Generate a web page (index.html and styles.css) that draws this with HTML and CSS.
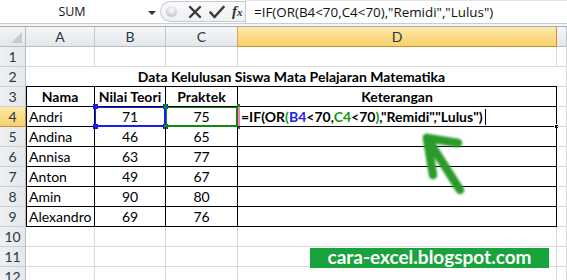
FILE: index.html
```html
<!DOCTYPE html>
<html>
<head>
<meta charset="utf-8">
<link rel="stylesheet" href="styles.css">
</head>
<body>
<div class="fbar">
  <div class="namebox"><span class="nb-text">SUM</span><span class="nb-arrow"></span></div>
  <div class="fbtns">
    <span class="dot"></span>
    <svg class="ico" width="14" height="14" viewBox="0 0 14 14"><path d="M2 2 L12 12 M12 2 L2 12" stroke="#3a3a3a" stroke-width="2.4" stroke-linecap="round"/></svg>
    <svg class="ico" width="16" height="14" viewBox="0 0 16 14"><path d="M1.5 7.5 L5.5 12 L14.5 2" stroke="#3a3a3a" stroke-width="2.6" fill="none" stroke-linecap="round" stroke-linejoin="round"/></svg>
    <span class="fx">f<span class="fxx">x</span></span>
  </div>
  <div class="finput">=IF(OR(B4&lt;70,C4&lt;70),"Remidi","Lulus")</div>
</div>
<div class="band"></div>
<div class="sheet">
  <div class="corner"><span class="tri"></span></div>
  <div class="ch">A</div><div class="ch">B</div><div class="ch">C</div><div class="ch sel">D</div><div class="ch e"></div>

  <div class="rh">1</div><div class="c"></div><div class="c"></div><div class="c"></div><div class="c"></div><div class="c e"></div>

  <div class="rh">2</div><div class="c title">Data Kelulusan Siswa Mata Pelajaran Matematika</div><div class="c e"></div>

  <div class="rh">3</div><div class="c t tl hd">Nama</div><div class="c t hd">Nilai Teori</div><div class="c t hd">Praktek</div><div class="c t hd">Keterangan</div><div class="c e"></div>

  <div class="rh sel">4</div><div class="c t tl">Andri</div><div class="c t num b4">71<i class="h h1"></i><i class="h h2"></i><i class="h h3"></i><i class="h h4"></i></div><div class="c t num c4">75<i class="h h1"></i><i class="h h2"></i><i class="h h3"></i><i class="h h4"></i></div><div class="c t d4"><span class="fm">=IF(OR<span class="g">(</span><span class="bl">B4</span>&lt;70,<span class="g">C4</span>&lt;70<span class="g">)</span>,"Remidi","Lulus")</span><span class="caret"></span><i class="fill"></i></div><div class="c e"></div>

  <div class="rh">5</div><div class="c t tl">Andina</div><div class="c t num">46</div><div class="c t num">65</div><div class="c t"></div><div class="c e"></div>
  <div class="rh">6</div><div class="c t tl">Annisa</div><div class="c t num">63</div><div class="c t num">77</div><div class="c t"></div><div class="c e"></div>
  <div class="rh">7</div><div class="c t tl">Anton</div><div class="c t num">49</div><div class="c t num">67</div><div class="c t"></div><div class="c e"></div>
  <div class="rh">8</div><div class="c t tl">Amin</div><div class="c t num">90</div><div class="c t num">80</div><div class="c t"></div><div class="c e"></div>
  <div class="rh">9</div><div class="c t tl">Alexandro</div><div class="c t num">69</div><div class="c t num">76</div><div class="c t"></div><div class="c e"></div>

  <div class="rh">10</div><div class="c"></div><div class="c"></div><div class="c"></div><div class="c"></div><div class="c e"></div>
  <div class="rh">11</div><div class="c"></div><div class="c"></div><div class="c"></div><div class="c"></div><div class="c e"></div>
  <div class="rh">12</div><div class="c"></div><div class="c"></div><div class="c"></div><div class="c"></div><div class="c e"></div>

  <svg class="arrow" width="80" height="80" viewBox="0 0 80 80">
    <defs><filter id="bl" x="-20%" y="-20%" width="140%" height="140%"><feGaussianBlur stdDeviation="1"/></filter></defs>
    <g filter="url(#bl)" stroke="#2a9a2a" stroke-width="8.5" stroke-linecap="round" fill="none">
      <path d="M9 7 L42 59"/>
      <path d="M9 7 L40 12"/>
      <path d="M9 7 L15 44"/>
    </g>
  </svg>
  <div class="wm">cara-excel.blogspot.com</div>
</div>
</body>
</html>
```
FILE: styles.css
```css
html, body {
  margin: 0;
  padding: 0;
  width: 567px;
  height: 280px;
  overflow: hidden;
  background: #ffffff;
  font-family: Lato, "Noto Sans", sans-serif;
}

.fbar {
  display: flex;
  height: 23px;
  background: #ffffff;
}

.namebox {
  width: 160px;
  position: relative;
  display: flex;
  align-items: center;
  justify-content: center;
  font-family: "Open Sans", "Noto Sans", sans-serif;
  font-size: 12.5px;
  color: #111;
  box-sizing: border-box;
}
.nb-text { margin-left: -16px; }
.nb-arrow {
  position: absolute;
  left: 148px;
  top: 11px;
  width: 0;
  height: 0;
  border-left: 4px solid transparent;
  border-right: 4px solid transparent;
  border-top: 4px solid #333;
}

.fbtns {
  width: 85px;
  box-sizing: border-box;
  display: flex;
  align-items: center;
  gap: 7px;
  padding-left: 5px;
  background: linear-gradient(#f9fafb, #eef0f2);
  border: 1px solid #c6cad0;
  border-right: none;
  border-radius: 11px 0 0 11px;
  margin-top: 1px;
  height: 21px;
}
.dot {
  width: 11px;
  height: 11px;
  border-radius: 50%;
  background: radial-gradient(circle at 50% 35%, #ffffff, #c9ccd1 70%, #b3b7bd);
  margin-right: 4px;
}
.ico { display: block; }
.fx {
  font-family: "Liberation Serif", "DejaVu Serif", serif;
  font-style: italic;
  font-weight: bold;
  font-size: 15px;
  color: #333;
  line-height: 1;
}
.fxx { font-size: 11px; }

.finput {
  flex: 1;
  border-left: 1px solid #c6cad0;
  border-top: 1px solid #e2e4e7;
  padding-left: 8px;
  font-family: "Open Sans", "Noto Sans", sans-serif;
  font-size: 13.4px;
  color: #111;
  display: flex;
  align-items: center;
}

.band {
  border-top: 1px solid #c9cdd3;
  border-bottom: 1px solid #a8adb4;
  background: #f4f5f6;
  box-sizing: border-box;
  height: 4px;
}

.sheet {
  position: relative;
  display: grid;
  grid-template-columns: 26px 69px 71px 72px 319px 10px;
  grid-auto-rows: 20px;
}

.corner {
  background: linear-gradient(#f3f4f6, #e3e6ea);
  border-right: 1px solid #b9bec5;
  border-bottom: 1px solid #b9bec5;
  box-sizing: border-box;
  position: relative;
}
.tri {
  position: absolute;
  right: 3px;
  bottom: 3px;
  width: 0;
  height: 0;
  border-left: 11px solid transparent;
  border-bottom: 11px solid #c8ccd1;
}

.ch {
  background: linear-gradient(#f5f6f8, #e4e7eb);
  border-right: 1px solid #c2c7cd;
  border-bottom: 1px solid #b9bec5;
  box-sizing: border-box;
  display: flex;
  align-items: center;
  justify-content: center;
  font-size: 14px;
  color: #2a3645;
}
.ch.sel {
  background: linear-gradient(#fde9a9, #f8d06b);
  border-right: 1px solid #c8923a;
  border-bottom: 1px solid #c8923a;
  border-left: 1px solid #d9a54a;
  margin-left: -1px;
}

.rh {
  background: linear-gradient(90deg, #eef0f3, #e5e8ec);
  border-right: 1px solid #b9bec5;
  border-bottom: 1px solid #cdd1d6;
  box-sizing: border-box;
  display: flex;
  align-items: center;
  justify-content: center;
  font-size: 14px;
  color: #2a3645;
}
.rh.sel {
  background: linear-gradient(#fde9a9, #f8d06b);
  border-right: 1px solid #c8923a;
  border-bottom: 1px solid #c8923a;
}

.c {
  border-right: 1px solid #d9d9d9;
  border-bottom: 1px solid #d9d9d9;
  box-sizing: border-box;
  display: flex;
  align-items: flex-end;
  padding: 0 3px 1px 3px;
  font-size: 14px;
  line-height: 17px;
  color: #000;
  white-space: nowrap;
  position: relative;
}
.c.e { padding: 0; }

.title {
  grid-column: span 4;
  justify-content: center;
  font-weight: bold;
  border-right: none;
  border-bottom: 1px solid #000;
}

.t {
  border-right: 1px solid #000;
  border-bottom: 1px solid #000;
}
.tl { box-shadow: inset 1px 0 0 #000; }
.hd { justify-content: center; font-weight: bold; }
.num { justify-content: center; }

.b4 { box-shadow: inset 0 0 0 1px #1a1aff; border-color: #1a1aff; }
.c4 { box-shadow: inset 0 0 0 1px #118811; border-color: #118811; }

.h {
  position: absolute;
  width: 5px;
  height: 5px;
}
.b4 .h { background: #1a1aff; }
.c4 .h { background: #118811; width: 3px; height: 5px; }
.h1 { left: -2px; top: -3px; }
.h2 { right: -3px; top: -3px; }
.h3 { left: -2px; bottom: -3px; }
.h4 { right: -3px; bottom: -3px; }

.d4 {
  box-shadow: inset 2px 0 0 #ff77cc;
  font-weight: bold;
  padding-left: 3px;
}
.fm { letter-spacing: 0; }
.g { color: #119911; }
.bl { color: #2222dd; }
.caret {
  width: 1px;
  height: 16px;
  background: #000;
  margin-left: 2px;
  align-self: flex-end;
}
.fill {
  position: absolute;
  right: -3px;
  bottom: -3px;
  width: 5px;
  height: 5px;
  background: #000;
  border: 1px solid #fff;
  box-sizing: border-box;
}

.arrow {
  position: absolute;
  left: 418px;
  top: 104px;
}

.wm {
  position: absolute;
  left: 310px;
  top: 221px;
  width: 239px;
  height: 20px;
  background: #18a33c;
  color: #ffffff;
  font-weight: bold;
  font-size: 19px;
  line-height: 17px;
  text-align: center;
  white-space: nowrap;
}
```
